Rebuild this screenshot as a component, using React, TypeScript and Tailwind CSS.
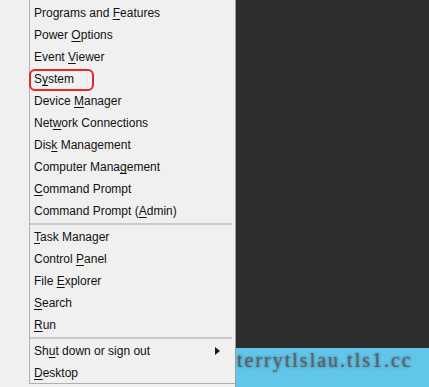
type Item = { pre: string; key: string; post: string; arrow?: boolean };

const groups: Item[][] = [
  [
    { pre: "Programs and ", key: "F", post: "eatures" },
    { pre: "Power ", key: "O", post: "ptions" },
    { pre: "Event ", key: "V", post: "iewer" },
    { pre: "S", key: "y", post: "stem" },
    { pre: "Device ", key: "M", post: "anager" },
    { pre: "Net", key: "w", post: "ork Connections" },
    { pre: "Dis", key: "k", post: " Management" },
    { pre: "Computer Mana", key: "g", post: "ement" },
    { pre: "", key: "C", post: "ommand Prompt" },
    { pre: "Command Prompt (", key: "A", post: "dmin)" },
  ],
  [
    { pre: "", key: "T", post: "ask Manager" },
    { pre: "Control ", key: "P", post: "anel" },
    { pre: "File ", key: "E", post: "xplorer" },
    { pre: "", key: "S", post: "earch" },
    { pre: "", key: "R", post: "un" },
  ],
  [
    { pre: "Sh", key: "u", post: "t down or sign out", arrow: true },
    { pre: "", key: "D", post: "esktop" },
  ],
];

function MenuRow({ item, highlight }: { item: Item; highlight?: boolean }) {
  return (
    <div className="relative h-[22px] flex items-center pl-[4px] pr-[12px]">
      {highlight && (
        <div className="absolute left-[-1px] top-[1px] w-[65px] h-[22px] rounded-[6px] border-2 border-[#e3262c]" />
      )}
      <span className="flex-1 whitespace-nowrap">
        {item.pre}
        <span className="underline underline-offset-[2px]">{item.key}</span>
        {item.post}
      </span>
      {item.arrow && (
        <svg width="5" height="8" viewBox="0 0 5 8" className="mr-[3px]">
          <path d="M0 0 L5 4 L0 8 Z" fill="#1a1a1a" />
        </svg>
      )}
    </div>
  );
}

export default function App() {
  return (
    <div className="w-[429px] h-[387px] flex overflow-hidden bg-[#f0f0f0]">
      <div className="w-[236px] h-[387px] bg-[#f0f0f0] border-r border-[#a0a0a0]">
        <div className="ml-[29px] h-[384px] border-l border-b border-[#b0b0b0] pt-[2px] text-[12px] text-[#111] font-['Liberation_Sans',Arial,sans-serif]">
          {groups.map((group, gi) => (
            <div key={gi}>
              {gi > 0 && (
                <div className="h-[4px] flex items-center mr-[3px]">
                  <div className="w-full h-[2px] bg-[#c8c8c8]" />
                </div>
              )}
              {group.map((item, i) => (
                <MenuRow key={i} item={item} highlight={gi === 0 && i === 3} />
              ))}
            </div>
          ))}
        </div>
      </div>
      <div className="flex-1 flex flex-col">
        <div className="h-[348px] bg-[#2d2d2d]" />
        <div className="flex-1 bg-[#62c6e8] relative">
          <span className="absolute left-[1px] top-[-3px] whitespace-nowrap text-[20px] tracking-[2px] text-[#56616c] font-['Liberation_Serif',serif] [text-shadow:0_0_3px_#4a5a66]">
            terrytlslau.tls1.cc
          </span>
        </div>
      </div>
    </div>
  );
}
